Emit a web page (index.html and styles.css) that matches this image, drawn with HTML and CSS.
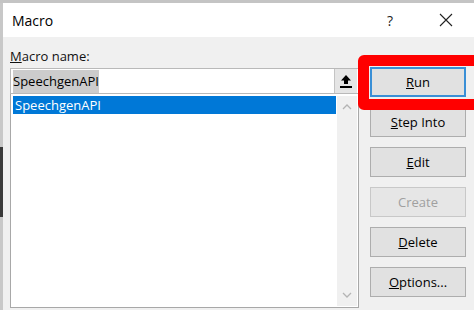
FILE: index.html
```html
<!DOCTYPE html>
<html lang="en">
<head>
    <meta charset="UTF-8">
    <title>Macro</title>
    <link rel="stylesheet" href="styles.css">
</head>
<body>
    <div class="screen">
        <div class="edge-top"></div>
        <div class="frame">
            <div class="edge-left">
                <span class="edge-light"></span>
                <span class="edge-dark"></span>
                <span class="edge-light edge-fill"></span>
            </div>
            <div class="dialog">
                <div class="titlebar">
                    <span class="title">Macro</span>
                    <span class="help">?</span>
                    <span class="close">
                        <svg width="14" height="14" viewBox="0 0 14 14"><path d="M1 1L13 13M13 1L1 13" stroke="#222" stroke-width="1.1" fill="none"/></svg>
                    </span>
                </div>
                <div class="content">
                    <div class="main">
                        <label class="name-label" for="macroName"><u>M</u>acro name:</label>
                        <div class="namebox">
                            <span class="name-text" id="macroName"><span class="sel">SpeechgenAPI</span></span>
                            <span class="pick">
                                <svg width="12" height="14" viewBox="0 0 12 14"><path d="M6 1L1 6.5H4V10H8V6.5H11Z" fill="#000"/><rect x="0" y="12" width="12" height="2" fill="#000"/></svg>
                            </span>
                        </div>
                        <div class="list">
                            <div class="items">
                                <div class="item selected">SpeechgenAPI</div>
                            </div>
                            <div class="scroll">
                                <svg width="10" height="6" viewBox="0 0 10 6"><path d="M1 5L5 1L9 5" stroke="#b4b4b4" stroke-width="1.3" fill="none"/></svg>
                                <svg width="10" height="6" viewBox="0 0 10 6"><path d="M1 1L5 5L9 1" stroke="#b4b4b4" stroke-width="1.3" fill="none"/></svg>
                            </div>
                        </div>
                    </div>
                    <div class="actions">
                        <div class="highlight">
                            <button class="btn default"><u>R</u>un</button>
                        </div>
                        <button class="btn"><u>S</u>tep Into</button>
                        <button class="btn"><u>E</u>dit</button>
                        <button class="btn" disabled>Create</button>
                        <button class="btn"><u>D</u>elete</button>
                        <button class="btn"><u>O</u>ptions...</button>
                    </div>
                </div>
            </div>
        </div>
    </div>
</body>
</html>
```

FILE: styles.css
```css
body {
    margin: 0;
    font-family: "Open Sans", "Noto Sans", sans-serif;
    color: #000;
    background: #f0f0f0;
}
.screen {
    width: 474px;
    height: 310px;
    overflow: hidden;
    display: flex;
    flex-direction: column;
}
.edge-top {
    height: 3px;
    background: #c4c4c4;
}
.frame {
    flex: 1;
    display: flex;
}
.edge-left {
    width: 3px;
    display: flex;
    flex-direction: column;
}
.edge-light {
    height: 144px;
    background: #c8c8c8;
}
.edge-dark {
    height: 70px;
    background: #3a3a3a;
}
.edge-fill {
    flex: 1;
}
.dialog {
    flex: 1;
    display: flex;
    flex-direction: column;
    background: #f0f0f0;
}
.titlebar {
    height: 34px;
    background: #fff;
    display: flex;
    align-items: center;
    padding-left: 9px;
}
.title {
    font-size: 14px;
    flex: 1;
}
.help {
    font-size: 14px;
    color: #222;
    width: 14px;
    text-align: center;
    margin-right: 42px;
}
.close {
    display: flex;
    margin-right: 21px;
}
.content {
    flex: 1;
    display: flex;
    gap: 11px;
    padding: 10px 0 0 7px;
}
.main {
    width: 349px;
    display: flex;
    flex-direction: column;
}
.name-label {
    font-size: 13px;
    line-height: 18px;
    margin-bottom: 3px;
    color: #111;
}
.namebox {
    height: 24px;
    background: #fff;
    border: 1px solid #b9b9b9;
    display: flex;
    align-items: center;
    justify-content: space-between;
    padding-left: 2px;
}
.name-text {
    font-size: 13px;
}
.sel {
    background: #cccccc;
    padding: 2px 0 3px;
}
.pick {
    width: 22px;
    height: 24px;
    background: #e5e5e5;
    border-left: 1px solid #c4c4c4;
    display: flex;
    align-items: center;
    justify-content: center;
    margin-right: 1px;
}
.list {
    height: 210px;
    background: #fff;
    border: 1px solid #a8a8a8;
    border-top: none;
    display: flex;
    padding: 2px 1px 1px;
}
.items {
    flex: 1;
}
.item {
    height: 18px;
    line-height: 18px;
    font-size: 13px;
    padding-left: 2px;
    margin-left: 1px;
}
.selected {
    background: #0078d7;
    color: #fff;
}
.scroll {
    width: 20px;
    margin-left: 1px;
    background: #f0f0f0;
    display: flex;
    flex-direction: column;
    align-items: center;
    justify-content: space-between;
    padding: 8px 0 8px;
}
.actions {
    width: 96px;
    display: flex;
    flex-direction: column;
    gap: 10px;
    padding-top: 20px;
}
.btn {
    width: 96px;
    height: 30px;
    background: #e1e1e1;
    border: 1px solid #adadad;
    font-family: inherit;
    font-size: 13px;
    color: #000;
    padding: 0;
}
.btn:disabled {
    color: #a0a0a0;
    background: #e6e6e6;
    border-color: #c8c8c8;
}
.default {
    border: 2px solid #3a8fd6;
}
.highlight {
    position: relative;
    height: 30px;
}
.highlight::after {
    content: "";
    position: absolute;
    left: -12px;
    top: -12px;
    right: -30px;
    bottom: -13px;
    border: 11px solid #f00;
    border-radius: 6px;
}
```
